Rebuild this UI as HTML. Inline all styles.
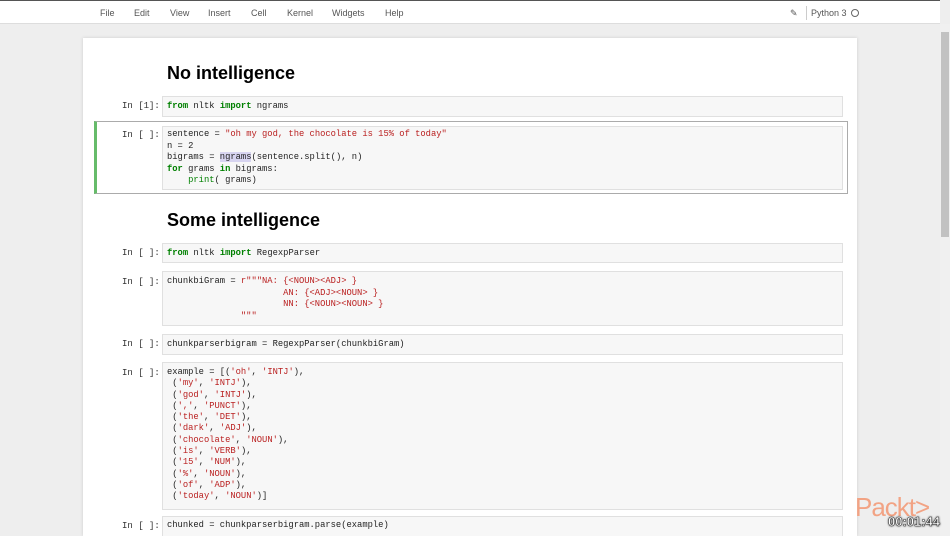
<!DOCTYPE html>
<html style="width:950px;height:536px;overflow:hidden"><head><style>
body{margin:0;width:950px;height:536px;overflow:hidden;background:#eeeeee;font-family:"Liberation Sans",sans-serif;position:relative}
.top{position:absolute;left:0;top:0;width:940px;height:24px;background:#fff;border-top:1px solid #555;border-bottom:1px solid #ddd;box-sizing:border-box}
.menu{position:absolute;top:7px;font-size:9px;color:#555}
.panel{position:absolute;left:83px;top:38px;width:774px;height:498px;background:#fff;box-shadow:0 0 3px #ccc}
.h{position:absolute;left:167px;font-size:18px;font-weight:bold;color:#000}
.pr{position:absolute;left:122px;font-family:"Liberation Mono",monospace;font-size:9px;color:#333}
.box{position:absolute;left:162px;width:681px;background:#f7f7f7;border:1px solid #e0e0e0;box-sizing:border-box}
.code{position:absolute;left:167px;font-family:"Liberation Mono",monospace;font-size:8.8px;line-height:11.5px;color:#222;white-space:pre}
.k{color:#008000;font-weight:bold}.s{color:#ba2121}
.sb{position:absolute;left:940px;top:24px;width:10px;height:512px;background:#f0f0f0}
.th{position:absolute;left:941px;top:32px;width:8px;height:205px;background:#c2c2c2}
</style></head><body>
<div class="top">
<span class="menu" style="left:100px">File</span><span class="menu" style="left:134px">Edit</span><span class="menu" style="left:170px">View</span><span class="menu" style="left:208px">Insert</span><span class="menu" style="left:251px">Cell</span><span class="menu" style="left:287px">Kernel</span><span class="menu" style="left:332px">Widgets</span><span class="menu" style="left:385px">Help</span>
<span class="menu" style="left:790px">✎</span><span style="position:absolute;left:806px;top:5px;width:1px;height:14px;background:#ccc"></span><span class="menu" style="left:811px">Python 3</span>
<span style="position:absolute;left:851px;top:8px;width:6px;height:6px;border:1.5px solid #666;border-radius:50%"></span>
</div>
<div class="sb"></div><div class="th"></div>
<div class="panel"></div>
<div class="h" style="top:63px">No intelligence</div>
<div class="pr" style="top:101px">In [1]:</div>
<div class="box" style="top:96px;height:21px"></div>
<div class="code" style="top:101px"><span class="k">from</span> nltk <span class="k">import</span> ngrams</div>
<div style="position:absolute;left:94px;top:121px;width:754px;height:73px;border:1px solid #ababab;border-left:3px solid #66bb6a;box-sizing:border-box"></div>
<div class="pr" style="top:130px">In [ ]:</div>
<div class="box" style="top:126px;height:64px"></div>
<div class="code" style="top:129px">sentence = <span class="s">"oh my god, the chocolate is 15% of today"</span>
n = 2
bigrams = <span style="background:#d7d4f0">ngrams</span>(sentence.split(), n)
<span class="k">for</span> grams <span class="k">in</span> bigrams:
    <span style="color:#008000">print</span>( grams)</div>
<div class="h" style="top:210px">Some intelligence</div>
<div class="pr" style="top:248px">In [ ]:</div>
<div class="box" style="top:243px;height:20px"></div>
<div class="code" style="top:248px"><span class="k">from</span> nltk <span class="k">import</span> RegexpParser</div>
<div class="pr" style="top:277px">In [ ]:</div>
<div class="box" style="top:271px;height:55px"></div>
<div class="code" style="top:276px">chunkbiGram = <span class="s">r"""NA: {&lt;NOUN&gt;&lt;ADJ&gt; }
                      AN: {&lt;ADJ&gt;&lt;NOUN&gt; }
                      NN: {&lt;NOUN&gt;&lt;NOUN&gt; }
              """</span></div>
<div class="pr" style="top:339px">In [ ]:</div>
<div class="box" style="top:334px;height:21px"></div>
<div class="code" style="top:339px">chunkparserbigram = RegexpParser(chunkbiGram)</div>
<div class="pr" style="top:368px">In [ ]:</div>
<div class="box" style="top:362px;height:148px"></div>
<div class="code" style="top:367px;line-height:11.3px">example = [(<span class="s">'oh'</span>, <span class="s">'INTJ'</span>),
 (<span class="s">'my'</span>, <span class="s">'INTJ'</span>),
 (<span class="s">'god'</span>, <span class="s">'INTJ'</span>),
 (<span class="s">','</span>, <span class="s">'PUNCT'</span>),
 (<span class="s">'the'</span>, <span class="s">'DET'</span>),
 (<span class="s">'dark'</span>, <span class="s">'ADJ'</span>),
 (<span class="s">'chocolate'</span>, <span class="s">'NOUN'</span>),
 (<span class="s">'is'</span>, <span class="s">'VERB'</span>),
 (<span class="s">'15'</span>, <span class="s">'NUM'</span>),
 (<span class="s">'%'</span>, <span class="s">'NOUN'</span>),
 (<span class="s">'of'</span>, <span class="s">'ADP'</span>),
 (<span class="s">'today'</span>, <span class="s">'NOUN'</span>)]</div>
<div class="pr" style="top:521px">In [ ]:</div>
<div class="box" style="top:516px;height:22px"></div>
<div class="code" style="top:520px">chunked = chunkparserbigram.parse(example)</div>
<div style="position:absolute;left:855px;top:492px;font-size:26px;color:#f2a384;letter-spacing:-1px">Packt&gt;</div>
<div style="position:absolute;left:888px;top:514px;font-size:13px;font-weight:bold;color:#fff;-webkit-text-stroke:0.5px #333;text-shadow:0 0 2px #000">00:01:44</div>
</body></html>
